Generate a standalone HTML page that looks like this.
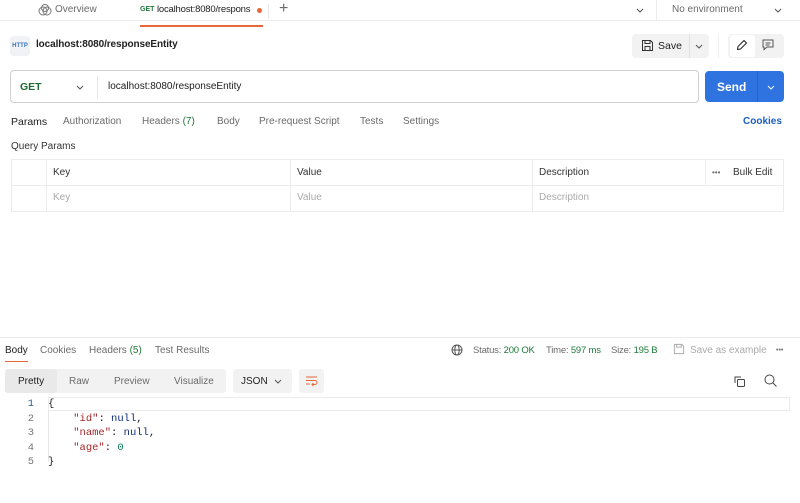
<!DOCTYPE html>
<html><head><style>
*{margin:0;padding:0;box-sizing:border-box}
body{width:800px;height:503px;background:#fff;font-family:"Liberation Sans",sans-serif;font-size:10.5px;color:#212121;position:relative;overflow:hidden}
.a{position:absolute;white-space:nowrap}
.g{color:#6b6b6b}
.mono{font-family:"Liberation Mono",monospace;font-size:10.5px}
</style></head><body>
<div class="a" style="left:0;top:0;width:800px;height:21px;border-bottom:1px solid #ececec"></div>
<svg class="a" style="left:38px;top:4px" width="14" height="12" viewBox="0 0 14 12"><circle cx="5" cy="7" r="4" fill="none" stroke="#777"/><circle cx="9" cy="7" r="4" fill="none" stroke="#777"/><circle cx="7" cy="4" r="3.5" fill="none" stroke="#777"/></svg>
<div class="a g" style="left:55px;top:4px;font-size:10px">Overview</div>
<div class="a" style="left:140px;top:6px;font-size:7px;font-weight:bold;color:#1f7a3a">GET</div>
<div class="a" style="left:157px;top:4px;font-size:9.5px;letter-spacing:-0.2px">localhost:8080/respons</div>
<div class="a" style="left:257px;top:8px;width:5px;height:5px;border-radius:50%;background:#e8673a"></div>
<div class="a" style="left:140px;top:25px;width:123px;height:2px;background:#e8673a"></div>
<div class="a" style="left:268px;top:4px;width:1px;height:14px;background:#e6e6e6"></div>
<div class="a g" style="left:279px;top:0px;font-size:16px">+</div>
<svg class="a" style="left:636px;top:8px" width="8" height="5" viewBox="0 0 8 5"><path d="M1 1l3 3 3-3" fill="none" stroke="#555"/></svg>
<div class="a" style="left:656px;top:0;width:1px;height:21px;background:#ececec"></div>
<div class="a g" style="left:672px;top:4px;font-size:10px">No environment</div>
<svg class="a" style="left:774px;top:8px" width="8" height="5" viewBox="0 0 8 5"><path d="M1 1l3 3 3-3" fill="none" stroke="#555"/></svg>

<div class="a" style="left:10px;top:36px;width:20px;height:20px;background:#f0f2f5;border-radius:3px;font-size:6px;color:#3a73b8;font-weight:bold;text-align:center;line-height:20px">HTTP</div>
<div class="a" style="left:36px;top:39px;font-size:10px;font-weight:bold;letter-spacing:-0.1px">localhost:8080/responseEntity</div>
<div class="a" style="left:632px;top:34px;width:77px;height:24px;background:#f2f2f2;border-radius:4px"></div>
<svg class="a" style="left:641px;top:39px" width="13" height="13" viewBox="0 0 13 13"><path d="M1.5 1.5h8l2 2v8h-10z M4 1.5v3h5v-3 M4 11.5v-4h5v4" fill="none" stroke="#333"/></svg>
<div class="a" style="left:658px;top:40px;font-size:10.5px">Save</div>
<div class="a" style="left:689px;top:34px;width:1px;height:24px;background:#e0e0e0"></div>
<svg class="a" style="left:695px;top:44px" width="8" height="5" viewBox="0 0 8 5"><path d="M1 1l3 3 3-3" fill="none" stroke="#555"/></svg>
<div class="a" style="left:718px;top:34px;width:1px;height:24px;background:#eee"></div>
<div class="a" style="left:728px;top:34px;width:56px;height:24px;background:#f2f2f2;border-radius:4px"></div>
<div class="a" style="left:730px;top:35px;width:25px;height:22px;background:#fff;border-radius:3px"></div>
<svg class="a" style="left:736px;top:39px" width="12" height="12" viewBox="0 0 12 12"><path d="M1.5 10.5l.5-3 6-6 2.5 2.5-6 6z" fill="none" stroke="#222"/></svg>
<svg class="a" style="left:762px;top:39px" width="12" height="12" viewBox="0 0 12 12"><path d="M1 1h10v7h-6l-3 2.5v-2.5h-1z M3.5 4h5 M3.5 6h4" fill="none" stroke="#555"/></svg>

<div class="a" style="left:10px;top:70px;width:689px;height:33px;border:1px solid #cfcfcf;border-radius:4px"></div>
<div class="a" style="left:20px;top:81px;font-weight:bold;color:#1f6b33;font-size:10.5px">GET</div>
<svg class="a" style="left:76px;top:85px" width="8" height="5" viewBox="0 0 8 5"><path d="M1 1l3 3 3-3" fill="none" stroke="#555"/></svg>
<div class="a" style="left:97px;top:76px;width:1px;height:22px;background:#e6e6e6"></div>
<div class="a" style="left:108px;top:81px;font-size:10px">localhost:8080/responseEntity</div>
<div class="a" style="left:705px;top:71px;width:79px;height:31px;background:#2e73e0;border-radius:4px"></div>
<div class="a" style="left:757px;top:71px;width:1px;height:31px;background:#2663c7"></div>
<div class="a" style="left:717px;top:80px;color:#fff;font-weight:bold;font-size:12px">Send</div>
<svg class="a" style="left:767px;top:85px" width="8" height="5" viewBox="0 0 8 5"><path d="M1 1l3 3 3-3" fill="none" stroke="#fff"/></svg>

<div class="a" style="left:11px;top:116px">Params</div>
<div class="a g" style="left:63px;top:116px;font-size:10px">Authorization</div>
<div class="a g" style="left:142px;top:116px;font-size:10px">Headers <span style="color:#1f7a3a">(7)</span></div>
<div class="a g" style="left:217px;top:116px;font-size:10px">Body</div>
<div class="a g" style="left:259px;top:116px;font-size:10px">Pre-request Script</div>
<div class="a g" style="left:360px;top:116px;font-size:10px">Tests</div>
<div class="a g" style="left:403px;top:116px;font-size:10px">Settings</div>
<div class="a" style="left:743px;top:116px;color:#1d5fbf;font-weight:bold;font-size:10px">Cookies</div>
<div class="a" style="left:11px;top:141px;font-size:10px;color:#333">Query Params</div>

<div class="a" style="left:11px;top:159px;width:773px;height:53px;border:1px solid #ececec"></div>
<div class="a" style="left:11px;top:185px;width:773px;height:1px;background:#ececec"></div>
<div class="a" style="left:46px;top:159px;width:1px;height:53px;background:#ececec"></div>
<div class="a" style="left:290px;top:159px;width:1px;height:53px;background:#ececec"></div>
<div class="a" style="left:532px;top:159px;width:1px;height:53px;background:#ececec"></div>
<div class="a" style="left:705px;top:159px;width:1px;height:26px;background:#ececec"></div>
<div class="a" style="left:53px;top:167px;font-size:10px;color:#333">Key</div>
<div class="a" style="left:297px;top:167px;font-size:10px;color:#333">Value</div>
<div class="a" style="left:539px;top:167px;font-size:10px;color:#333">Description</div>
<div class="a g" style="left:712px;top:168px;font-size:8px">•••</div>
<div class="a" style="left:733px;top:167px;font-size:10px;color:#333">Bulk Edit</div>
<div class="a" style="left:53px;top:192px;font-size:10px;color:#aaa">Key</div>
<div class="a" style="left:297px;top:192px;font-size:10px;color:#aaa">Value</div>
<div class="a" style="left:539px;top:192px;font-size:10px;color:#aaa">Description</div>

<div class="a" style="left:0;top:337px;width:800px;height:1px;background:#ececec"></div>
<div class="a" style="left:5px;top:345px;font-size:10px">Body</div>
<div class="a" style="left:5px;top:361px;width:23px;height:1px;background:#e8673a"></div>
<div class="a g" style="left:40px;top:345px;font-size:10px">Cookies</div>
<div class="a g" style="left:89px;top:345px;font-size:10px">Headers <span style="color:#1f7a3a">(5)</span></div>
<div class="a g" style="left:155px;top:345px;font-size:10px">Test Results</div>
<svg class="a" style="left:451px;top:344px" width="12" height="12" viewBox="0 0 12 12"><circle cx="6" cy="6" r="5" fill="none" stroke="#555"/><ellipse cx="6" cy="6" rx="2.2" ry="5" fill="none" stroke="#555"/><path d="M1 6h10" stroke="#555"/></svg>
<div class="a g" style="left:473px;top:345px;font-size:9.5px;letter-spacing:-0.2px">Status: <span style="color:#1f7a3a">200 OK</span></div>
<div class="a g" style="left:546px;top:345px;font-size:9.5px;letter-spacing:-0.2px">Time: <span style="color:#1f7a3a">597 ms</span></div>
<div class="a g" style="left:611px;top:345px;font-size:9.5px;letter-spacing:-0.2px">Size: <span style="color:#1f7a3a">195 B</span></div>
<svg class="a" style="left:673px;top:343px" width="12" height="12" viewBox="0 0 13 13"><path d="M1.5 1.5h8l2 2v8h-10z M4 1.5v3h5v-3" fill="none" stroke="#aaa"/></svg>
<div class="a" style="left:690px;top:345px;font-size:10px;color:#aaa">Save as example</div>
<div class="a g" style="left:776px;top:347px;font-size:7px">•••</div>

<div class="a" style="left:5px;top:369px;width:221px;height:24px;background:#f2f2f2;border-radius:3px"></div>
<div class="a" style="left:5px;top:369px;width:52px;height:24px;background:#e9e9e9;border-radius:3px"></div>
<div class="a" style="left:18px;top:376px;font-size:10px">Pretty</div>
<div class="a g" style="left:69px;top:376px;font-size:10px">Raw</div>
<div class="a g" style="left:114px;top:376px;font-size:10px">Preview</div>
<div class="a g" style="left:174px;top:376px;font-size:10px">Visualize</div>
<div class="a" style="left:233px;top:369px;width:59px;height:24px;background:#f2f2f2;border-radius:3px"></div>
<div class="a" style="left:241px;top:376px;font-size:10px">JSON</div>
<svg class="a" style="left:274px;top:379px" width="8" height="5" viewBox="0 0 8 5"><path d="M1 1l3 3 3-3" fill="none" stroke="#555"/></svg>
<div class="a" style="left:299px;top:369px;width:25px;height:24px;background:#f2f2f2;border-radius:3px"></div>
<svg class="a" style="left:305px;top:375px" width="13" height="12" viewBox="0 0 13 12"><path d="M1 2h11 M1 5.5h9a2 2 0 0 1 0 4h-3 M8.5 8l-1.5 1.5 1.5 1.5 M1 9h4" fill="none" stroke="#e8673a"/></svg>
<svg class="a" style="left:733px;top:375px" width="13" height="13" viewBox="0 0 13 13"><path d="M2 8v-6h6" fill="none" stroke="#444"/><rect x="4.5" y="4.5" width="7" height="7" rx="1" fill="none" stroke="#444"/></svg>
<svg class="a" style="left:764px;top:374px" width="13" height="13" viewBox="0 0 13 13"><circle cx="5.5" cy="5.5" r="4.5" fill="none" stroke="#444"/><path d="M9 9l3.5 3.5" stroke="#444"/></svg>

<div class="a" style="left:48px;top:397px;width:742px;height:14px;border:1px solid #ececec"></div>
<div class="a" style="left:48px;top:411px;width:1px;height:51px;background:#e6e6e6"></div>
<div class="a mono" style="left:26px;top:397px;line-height:14.5px;color:#2a5d8c;text-align:right;width:8px">1<br><span style="color:#777">2<br>3<br>4<br>5</span></div>
<div class="a mono" style="left:48px;top:397px;line-height:14.5px">{<br>&nbsp;&nbsp;&nbsp;&nbsp;<span style="color:#a3262a">"id"</span>: <span style="color:#0d2e7a">null</span>,<br>&nbsp;&nbsp;&nbsp;&nbsp;<span style="color:#a3262a">"name"</span>: <span style="color:#0d2e7a">null</span>,<br>&nbsp;&nbsp;&nbsp;&nbsp;<span style="color:#a3262a">"age"</span>: <span style="color:#0a7a5a">0</span><br>}</div>
</body></html>
